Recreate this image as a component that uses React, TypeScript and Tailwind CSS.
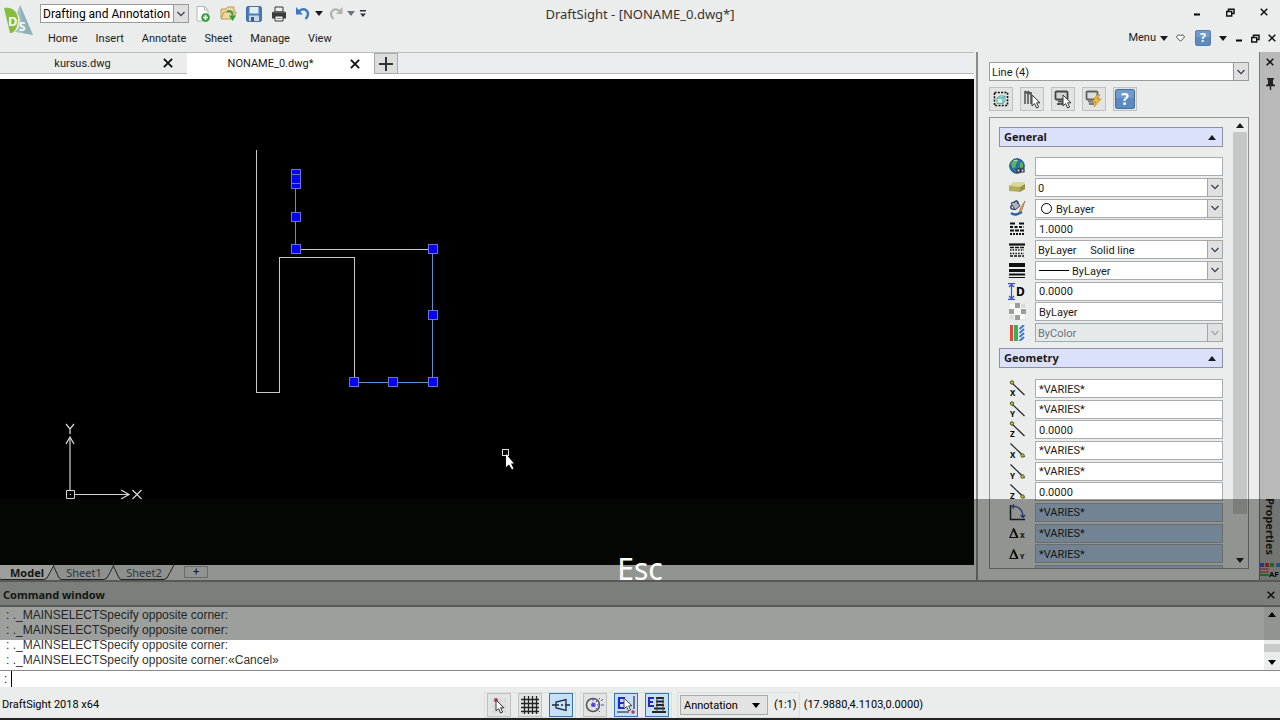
import type { ReactNode } from "react";

const Chevron = ({ className = "text-gray-700" }: { className?: string }) => (
    <svg width="8" height="6" viewBox="0 0 8 6" fill="none" stroke="currentColor" strokeWidth="1.3" className={className}>
        <path d="M.5 1 4 4.6 7.5 1" />
    </svg>
);

const Caret = ({ up = false, className = "" }: { up?: boolean; className?: string }) => (
    <svg width="8" height="5" viewBox="0 0 8 5" className={className}>
        <path d={up ? "M0 5h8L4 0z" : "M0 0h8L4 5z"} fill="currentColor" />
    </svg>
);

const Minimize = () => (
    <svg width="8" height="8" viewBox="0 0 8 8"><path d="M1 6.500h6" stroke="#000" strokeWidth="2" /></svg>
);

const Restore = () => (
    <svg width="9" height="9" viewBox="0 0 9 9" fill="none" stroke="#111">
        <path d="M2.500 3V1.200h5.500v4.300H6" strokeWidth="1.500" />
        <path d="M.7 3.500h5v4.500h-5z" strokeWidth="1.400" />
    </svg>
);

const Cross = ({ size = 8 }: { size?: number }) => (
    <svg width={size} height={size} viewBox="0 0 8 8" stroke="#111" strokeWidth="1.500">
        <path d="M.7.7l6.600 6.600M7.300.7.700 7.300" />
    </svg>
);

const Logo = () => (
    <svg width="30" height="32" viewBox="0 0 30 32">
        <path d="M0 4c9-2 14 5 14 12S10 30 6 29z" fill="#86bd3c" />
        <path d="M16 1 29 31 11 28c6-5 6-14 2-19z" fill="#a3c3c8" />
        <path d="M16 1 29 31l-10-2z" fill="#7fa5af" opacity=".6" />
        <text x="4" y="22" fontSize="13" fontWeight="bold" fill="#f4f8e8" fontFamily="Noto Sans">D</text>
        <text x="15" y="27" fontSize="12" fontWeight="bold" fill="#f4f8fa" fontFamily="Noto Sans">S</text>
    </svg>
);

const NewFile = () => (
    <svg width="16" height="16" viewBox="0 0 16 16">
        <path d="M2 .5h7.500L13 4v11H2z" fill="#fbfbfb" stroke="#b5b8b5" />
        <path d="M9.500.5V4H13" fill="none" stroke="#b5b8b5" />
        <circle cx="10.500" cy="11.500" r="4.300" fill="#2fa03c" />
        <path d="M10.500 9v5M8 11.500h5" stroke="#fff" strokeWidth="1.700" />
    </svg>
);

const OpenFile = () => (
    <svg width="17" height="16" viewBox="0 0 17 16">
        <path d="M1 12V3h5l1.500-2H14v4" fill="#ead9a4" stroke="#b89b55" />
        <path d="M1 13 4 6h12l-2.500 7z" fill="#efd9a0" stroke="#b89b55" />
        <path d="M7 5.500c4-1.500 5.500 1 5.500 4" fill="none" stroke="#3a9c3a" strokeWidth="2" />
        <path d="M9 9.500h7L12.500 15z" fill="#3a9c3a" />
    </svg>
);

const Save = () => (
    <svg width="16" height="16" viewBox="0 0 16 16">
        <rect x=".7" y=".7" width="14.600" height="14.600" rx="1" fill="#4b7fb9" stroke="#2d5d94" />
        <path d="M3.500 1h9v6.500h-9z" fill="#e5edf4" />
        <path d="M3 9.500h10V15H3z" fill="#c8d7e6" />
        <path d="M5 11h3v4H5z" fill="#355f8f" />
    </svg>
);

const Print = () => (
    <svg width="16" height="16" viewBox="0 0 16 16">
        <path d="M4 1h8v5H4z" fill="#eee" stroke="#333" />
        <path d="M1 6h14v6.500H1z" fill="#3a3c3c" />
        <path d="M3 5h10l2 2H1z" fill="#606262" />
        <path d="M4 10h8v5H4z" fill="#f4f4f4" stroke="#333" />
        <path d="M5.500 12.500h5" stroke="#888" />
    </svg>
);

const Undo = () => (
    <svg width="15" height="15" viewBox="0 0 15 15">
        <path d="M3 5c7-4.500 12 2 6.500 8" fill="none" stroke="#3c78bf" strokeWidth="2.400" />
        <path d="M0 1v7.500h7z" fill="#3c78bf" />
    </svg>
);

const Redo = () => (
    <svg width="15" height="15" viewBox="0 0 15 15">
        <path d="M12 5C5 .5 0 7 5.500 13" fill="none" stroke="#b1b3b3" strokeWidth="2.200" />
        <path d="M14.500 1v7h-6.500z" fill="#b1b3b3" />
    </svg>
);

const Heart = () => (
    <svg width="9" height="8" viewBox="0 0 9 8">
        <path d="M4.500 7.200 1 3.700C0 1.500 3-.3 4.500 2 6-.3 9 1.500 8 3.700z" fill="#fff" stroke="#444" />
    </svg>
);

const Help = ({ size = 18 }: { size?: number }) => (
    <svg width={size} height={size} viewBox="0 0 18 18">
        <rect x=".5" y=".5" width="17" height="17" rx="2" fill="#5b8bc1" stroke="#45709f" />
        <path d="M1 1h16v7H1z" fill="#7fa6d2" opacity=".6" />
        <text x="9" y="14" textAnchor="middle" fontSize="14" fontWeight="bold" fill="#fff" fontFamily="Noto Sans">?</text>
    </svg>
);

const pointer = "M0 0v11l2.600-2.400 2 4.400 2-1-2-4.200H8z";

const AddSelection = () => (
    <svg width="16" height="16" viewBox="0 0 16 16" fill="none">
        <rect x="1.500" y="1.500" width="13" height="13" stroke="#111" strokeWidth="1.600" strokeDasharray="2 1.300" />
        <path d="M4 7l3-2h5v5l-2 2.500H4z" fill="#cfeee2" stroke="#45b584" />
        <path d="M4 7h6v5.500M10 7l2-2" stroke="#4f8ed0" />
    </svg>
);

const SelectEntities = () => (
    <svg width="19" height="19" viewBox="0 0 19 19">
        <path d="M2 1v13M5 1v13M8 2v12M2 1l3 3M5 1l3 4" stroke="#4d4f4f" strokeWidth="1.500" fill="none" />
        <path d={pointer} transform="translate(9 5)" fill="#fff" stroke="#333" />
    </svg>
);

const SelectScreen = () => (
    <svg width="19" height="19" viewBox="0 0 19 19">
        <rect x="1.500" y="1.500" width="12" height="8" rx="1" fill="#d2d4d4" stroke="#444" strokeWidth="1.800" />
        <path d="M4 11.500h8M3 14h7" stroke="#555" strokeWidth="2" />
        <path d={pointer} transform="translate(9 5)" fill="#fff" stroke="#333" />
    </svg>
);

const QuickSelect = () => (
    <svg width="18" height="18" viewBox="0 0 18 18">
        <rect x="1.500" y="1.500" width="11" height="8" rx="1" fill="#dcdddd" stroke="#5f6161" strokeWidth="1.800" />
        <path d="M3 11.500h8M4 14h5" stroke="#777" strokeWidth="1.800" />
        <path d="M12 5 7 12h4l-2 5 7-8h-4l3-4z" fill="#f4bc2e" stroke="#ad7b16" strokeWidth=".6" />
    </svg>
);

const Globe = () => (
    <svg width="17" height="17" viewBox="0 0 17 17">
        <circle cx="8" cy="8" r="7.300" fill="#286fab" stroke="#24486c" />
        <path d="M4 2.500c4-2 5 1 3.500 3S8 9 5 10 3 6 2 5zM11 4l3 1v4l-3 1z" fill="#58b65a" />
        <path d="M8 11h3v3H8zM12 11h3v3h-3z" fill="#ddd" stroke="#333" strokeWidth="1.200" />
        <path d="M5 3c2-1 3-1 4 0" stroke="#cfeaf5" fill="none" />
    </svg>
);

const Layer = () => (
    <svg width="18" height="12" viewBox="0 0 18 12">
        <path d="M1 4.500 6 1h10l1 2-5 3z" fill="#dcd795" />
        <path d="M1 4.500 12 6v5L1 10z" fill="#b3ac5c" />
        <path d="M12 6l5-3v5l-5 3z" fill="#969045" />
    </svg>
);

const Paint = () => (
    <svg width="17" height="16" viewBox="0 0 17 16">
        <path d="M2 3 8 1l3 5-5 4z" fill="#aab4c2" stroke="#39475f" />
        <path d="M3 5c-3 3 0 5 3 4M5 3c1-3 4-3 4 1" fill="none" stroke="#39475f" strokeWidth="1.400" />
        <path d="M2 13c4 3 7 1 11-1" stroke="#315fa5" strokeWidth="2.500" fill="none" />
        <path d="M16 1l-3 9-3 3 1-4z" fill="#dfa346" stroke="#87602c" strokeWidth=".6" />
    </svg>
);

const LineScale = () => (
    <svg width="16" height="14" viewBox="0 0 16 14" stroke="#111" strokeWidth="1.800">
        <path d="M1 1.500h14" strokeDasharray="5 4" />
        <path d="M1 5h14" strokeDasharray="3 1.500" />
        <path d="M1 8.500h14" strokeDasharray="4 1" />
        <path d="M1 12h14" strokeDasharray="2 1" />
    </svg>
);

const LineStyle = () => (
    <svg width="16" height="14" viewBox="0 0 16 14" stroke="#111" strokeWidth="1.500">
        <path d="M0 1.500h16" strokeWidth="2.200" />
        <path d="M1 4.500h14" strokeDasharray="4 1" />
        <path d="M1 7h14M1 10.500h14" strokeDasharray="1.500 1.200" />
        <path d="M1 13h14" strokeDasharray="3 1" />
    </svg>
);

const LineWeight = () => (
    <svg width="16" height="16" viewBox="0 0 16 16">
        <path d="M0 1h16v4H0zM0 7h16v3H0zM0 11.500h16v2H0zM0 15h16v1H0z" fill="#111" />
    </svg>
);

const Thickness = () => (
    <svg width="18" height="17" viewBox="0 0 18 17">
        <path d="M0 .7h7M0 16.300h7M3.500 1v15M1 4l2.500-2.500L6 4M1 13l2.500 2.500L6 13" stroke="#3450c8" strokeWidth="1.200" fill="none" />
        <text x="8" y="13" fontSize="12" fontWeight="bold" fontFamily="Noto Sans">D</text>
    </svg>
);

const Transparency = () => (
    <svg width="17" height="17" viewBox="0 0 17 17">
        <path d="M0 0h17v17H0z" fill="#fafafa" stroke="#d8d8d8" />
        <path d="M6 0h5v5H6zM0 6h5v5H0zM12 6h5v5h-5zM6 12h5v5H6z" fill="#9c9e9a" />
        <path d="M1 12h4v4H1zM12 1h4v4h-4z" fill="#d9dbd7" />
    </svg>
);

const PrintStyle = () => (
    <svg width="16" height="16" viewBox="0 0 16 16">
        <path d="M1 0h3v16H1z" fill="#e04a3c" />
        <path d="M5 0h4v16H5z" fill="#3cae55" />
        <path d="M10.500 4 15 0M10.500 8 15 4M10.500 12 15 8M10.500 16l4.500-4" stroke="#3c78d0" strokeWidth="2" />
    </svg>
);

// start point icons carry the dot on top, end point icons at the bottom
const PointIcon = ({ axis, end = false }: { axis: string; end?: boolean }) => (
    <svg width="17" height="17" viewBox="0 0 17 17">
        <path d="M1.500 1.500 15.500 15" stroke="#222" strokeWidth="1.200" />
        <circle cx={end ? 13.5 : 3} cy={end ? 13.5 : 2.5} r="1.700" fill="#c3c83a" stroke="#4a4c20" />
        <text x="1" y="16" fontSize="8" fontWeight="bold" fontFamily="Noto Sans">{axis}</text>
    </svg>
);

const AngleIcon = () => (
    <svg width="17" height="17" viewBox="0 0 17 17" fill="none">
        <path d="M1.500 1v14.500H16" stroke="#222" strokeWidth="1.500" />
        <path d="M3 2.500c7-1 11 4 11 11M5 .5l-2 2 2 2M11.500 11l2.500 2.500L16 11" stroke="#3555b0" strokeWidth="1.300" />
    </svg>
);

const DeltaIcon = ({ axis }: { axis: string }) => (
    <svg width="17" height="14" viewBox="0 0 17 14">
        <path d="M1 11.500 4.500 3l4 8.500z" fill="none" stroke="#111" strokeWidth="1.200" />
        <path d="M4.500 3l4 8.500" stroke="#111" strokeWidth="2" />
        <text x="11" y="12" fontSize="7" fontWeight="bold" fontFamily="Noto Sans">{axis}</text>
    </svg>
);

const Pin = () => (
    <svg width="9" height="12" viewBox="0 0 9 12">
        <path d="M1 0h7v1.500H7V6l2 1v1.200H5.200V12H3.800V8.200H0V7l2-1V1.500H1z" fill="#222" />
    </svg>
);

const Snap = () => (
    <svg width="18" height="18" viewBox="0 0 18 18">
        <path d="M2 5h14M2 11h14M2 16h14M4 2v14M10 2v14M15 2v14" stroke="#cfcfcf" strokeDasharray="2 1" />
        <circle cx="6" cy="4" r="2" fill="#c23850" />
        <path d={pointer} transform="translate(6 4)" fill="#fff" stroke="#333" />
    </svg>
);

const GridIcon = () => (
    <svg width="18" height="18" viewBox="0 0 18 18">
        <path d="M0 3.500h18M0 7.500h18M0 11.500h18M0 15.500h18M3.500 0v18M7.500 0v18M11.500 0v18M15.500 0v18" stroke="#222" strokeWidth="1.300" />
    </svg>
);

const Ortho = () => (
    <svg width="18" height="14" viewBox="0 0 18 14" fill="none" stroke="#1b2b3b" strokeWidth="1.300">
        <path d="M14 1.500v11L4 10V4z" />
        <path d="M0 7h7M9 7h2M13 7h5" />
    </svg>
);

const Polar = () => (
    <svg width="20" height="18" viewBox="0 0 20 18" fill="none">
        <circle cx="8" cy="9" r="6.500" stroke="#555" strokeWidth="1.500" />
        <path d="M8 9h11M8 9l7-7M8 9l7 7M8 9V1M16 5l2-2" stroke="#5651c8" strokeDasharray="3 1" />
        <circle cx="8" cy="9" r="2" fill="#4a43e0" />
    </svg>
);

const ESnap = () => (
    <svg width="20" height="19" viewBox="0 0 20 19">
        <path d="M2 3h7M2 8h6M2 13h7M3 3v10" stroke="#2427cf" strokeWidth="2.200" />
        <path d={pointer} transform="translate(8 3)" fill="#fff" stroke="#444" />
        <path d="M1 17h12M18 1v13" stroke="#555" strokeWidth="1.500" />
        <circle cx="17" cy="17" r="1.800" fill="#d42c45" />
    </svg>
);

const ETrack = () => (
    <svg width="20" height="19" viewBox="0 0 20 19">
        <path d="M1 3h6M1 7h5M1 11h6M2 3v8" stroke="#2427cf" strokeWidth="2" />
        <path d="M9 3h8M9 6.500h8M9 10h8M7 13.500h11M5 17h14" stroke="#222" strokeWidth="2.200" />
        <path d="M10 2v15M16 2v15" stroke="#444" />
    </svg>
);

const Palette = () => (
    <svg width="20" height="15" viewBox="0 0 20 15">
        <path d="M0 0h4v4H0z" fill="#3c50c8" /><path d="M5 0h4v4H5z" fill="#d82630" /><path d="M10 0h4v4h-4z" fill="#309b3c" />
        <path d="M16 0h4v4h-4z" fill="#4b74c9" />
        <path d="M0 6h9M0 9h9" stroke="#c33c50" strokeWidth="1.500" strokeDasharray="2.500 .5" />
        <path d="M0 12h9" stroke="#30a03c" strokeWidth="2" />
        <text x="9" y="14" fontSize="8" fontWeight="bold" fontFamily="Roboto">AF</text>
    </svg>
);

type Row = {
    label: string;
    icon?: ReactNode;
    value: string;
    kind?: "select";
    mark?: "circle" | "line";
    disabled?: boolean;
    readOnly?: boolean;
};

const general: Row[] = [
    { label: "Hyperlink", icon: <Globe />, value: "" },
    { label: "Layer", icon: <Layer />, value: "0", kind: "select" },
    { label: "Line color", icon: <Paint />, value: "ByLayer", kind: "select", mark: "circle" },
    { label: "Line scale", icon: <LineScale />, value: "1.0000" },
    { label: "Line style", icon: <LineStyle />, value: "ByLayer\u00a0\u00a0\u00a0\u00a0\u00a0Solid line", kind: "select" },
    { label: "Line weight", icon: <LineWeight />, value: "ByLayer", kind: "select", mark: "line" },
    { label: "Thickness", icon: <Thickness />, value: "0.0000" },
    { label: "Transparency", icon: <Transparency />, value: "ByLayer" },
    { label: "Print style", icon: <PrintStyle />, value: "ByColor", kind: "select", disabled: true },
];

const geometry: Row[] = [
    { label: "Start X", icon: <PointIcon axis="X" />, value: "*VARIES*" },
    { label: "Start Y", icon: <PointIcon axis="Y" />, value: "*VARIES*" },
    { label: "Start Z", icon: <PointIcon axis="Z" />, value: "0.0000" },
    { label: "End X", icon: <PointIcon axis="X" end />, value: "*VARIES*" },
    { label: "End Y", icon: <PointIcon axis="Y" end />, value: "*VARIES*" },
    { label: "End Z", icon: <PointIcon axis="Z" end />, value: "0.0000" },
    { label: "Angle", icon: <AngleIcon />, value: "*VARIES*", readOnly: true },
    { label: "Delta X", icon: <DeltaIcon axis="X" />, value: "*VARIES*", readOnly: true },
    { label: "Delta Y", icon: <DeltaIcon axis="Y" />, value: "*VARIES*", readOnly: true },
    { label: "Delta Z", value: "", readOnly: true },
];

function PropertyRow({ row }: { row: Row }) {
    const pad = row.mark === "circle" ? "pl-5" : row.mark === "line" ? "pl-9" : "pl-0.5";
    return (
        <label className="flex h-[19px] items-center">
            <span className="flex w-9 justify-center">{row.icon}</span>
            {row.kind === "select" ? (
                <span className="relative flex h-full flex-1">
                    <select
                        aria-label={row.label}
                        disabled={row.disabled}
                        className={`w-full appearance-none border pt-0.5 ${pad} ${row.disabled ? "border-[#9faab5] bg-[#e6e9e9] text-gray-500 opacity-100" : "border-[#a9acae] bg-white"}`}
                    >
                        <option>{row.value}</option>
                    </select>
                    {row.mark === "circle" && <span className="absolute top-1 left-1.5 size-[11px] rounded-full border border-black" />}
                    {row.mark === "line" && <span className="absolute top-[9px] left-1 w-[30px] border-t border-black" />}
                    <span className="pointer-events-none absolute inset-y-0 right-0 flex w-4 items-center justify-center border border-[#a4a6a6] bg-[#dfe0df]">
                        <Chevron className={row.disabled ? "text-gray-400" : "text-gray-700"} />
                    </span>
                </span>
            ) : (
                <input
                    aria-label={row.label}
                    defaultValue={row.value}
                    readOnly={row.readOnly}
                    className={`h-full min-w-0 flex-1 border border-[#a9acae] px-[3px] pt-px ${row.readOnly ? "bg-[#b7d2ef]" : "bg-white"}`}
                />
            )}
        </label>
    );
}

function SectionHeader({ title }: { title: string }) {
    return (
        <button className="flex h-5 w-full items-center justify-between border border-[#8e919b] bg-[#dce1fb] px-1 font-['Noto_Sans',sans-serif] font-bold">
            {title}
            <Caret up className="mr-0.5" />
        </button>
    );
}

function ToolButton({ label, active = false, children }: { label: string; active?: boolean; children: ReactNode }) {
    return (
        <button
            aria-label={label}
            className={`flex size-6 items-center justify-center border ${active ? "border-[#3277b0] bg-[#c6e1f7]" : "border-[#bfc1c0] bg-[#e2e4e3]"}`}
        >
            {children}
        </button>
    );
}

function SheetTab({ name, active = false }: { name: string; active?: boolean }) {
    return (
        <button className={`relative -mr-1 h-[15px] w-16 font-['Noto_Sans',sans-serif] leading-[15px] ${active ? "z-10 pl-1.5 font-bold" : "text-gray-600"}`}>
            <svg viewBox="0 0 64 15" className="absolute inset-0 size-full" fill="none" stroke="#333">
                <path d="M1 0l6 13 2 1.500h43l3-1.500L62 0" fill={active ? "#fff" : "#e4e6e4"} />
            </svg>
            <span className="relative">{name}</span>
        </button>
    );
}

const grips = [
    [296, 95], [296, 105], [296, 100], [296, 138], [296, 170], [433, 170],
    [433, 236], [433, 303], [393, 303], [354, 303],
];

function Canvas() {
    return (
        <div className="relative flex-1 overflow-hidden bg-black">
            <svg className="absolute inset-0 size-full" fill="none" shapeRendering="crispEdges">
                <path d="M256.500 71v242h22.500V178.500h75.500V303M296 170h137" stroke="#c9c9c9" />
                <path d="M295.500 95v75M432.500 170v133h-79" stroke="#5c94cf" />
                {grips.map(([x, y]) => (
                    <rect key={`${x}-${y}`} x={x - 4.5} y={y - 4.5} width="9" height="9" fill="#0404f0" stroke="#6f6fd8" />
                ))}
                {/* coordinate system icon */}
                <g stroke="#d5d5d5" shapeRendering="auto">
                    <path d="M70 411v-52M75 415.500h54" strokeWidth="1.200" />
                    <path d="M66 365l4-7 4 7M121 411l8 4.500-8 4.500" strokeWidth="1.300" />
                    <path d="M66.500 411.500h8v8h-8zM70 415.500h1" />
                    <path d="M66 345l4 5 4-5M70 350v5M132.500 411l9 9M141.500 411l-9 9" strokeWidth="1.300" />
                </g>
                <path d="M502.500 370.500h6v6h-6z" stroke="#ddd" />
                <path d="M506 375v13l3-2.500 3 5 1.500-1-2.500-5h3z" fill="#fff" shapeRendering="auto" />
            </svg>
        </div>
    );
}

export default function App() {
    return (
        <div className="relative flex min-h-screen flex-col overflow-hidden bg-[#ebedec] font-['Roboto',sans-serif] text-[11px] text-[#1a1a1a]">
            <header className="flex h-[52px]">
                <div className="flex flex-1">
                    <div className="w-10 pt-1 pl-1"><Logo /></div>
                    <div>
                        <div className="flex h-[27px] items-center">
                            <span className="relative mr-1.5 flex">
                                <select aria-label="Workspace" className="h-[19px] w-[149px] appearance-none border border-[#999] bg-white pl-0.5 text-xs text-black">
                                    <option>Drafting and Annotation</option>
                                </select>
                                <span className="pointer-events-none absolute inset-y-0 right-0 flex w-4 items-center justify-center border border-[#999] bg-[#dedfde]"><Chevron /></span>
                            </span>
                            <div className="flex items-center gap-[9px]">
                                <button aria-label="New"><NewFile /></button>
                                <button aria-label="Open"><OpenFile /></button>
                                <button aria-label="Save"><Save /></button>
                                <button aria-label="Print"><Print /></button>
                                <button aria-label="Undo" className="flex items-center gap-1"><Undo /><Caret /></button>
                                <button aria-label="Redo" className="-ml-1 flex items-center gap-1 text-gray-500"><Redo /><Caret /></button>
                                <button aria-label="Customize" className="-ml-1">
                                    <svg width="6" height="7" viewBox="0 0 6 7"><path d="M0 0h6v1.500H0zM0 3.500h6L3 7z" fill="#333" /></svg>
                                </button>
                            </div>
                        </div>
                        <nav className="flex h-[25px] items-center gap-[18px] pl-2">
                            <button>Home</button>
                            <button>Insert</button>
                            <button>Annotate</button>
                            <button>Sheet</button>
                            <button>Manage</button>
                            <button>View</button>
                        </nav>
                    </div>
                </div>
                <h1 className="h-7 font-['Noto_Sans',sans-serif] text-[13px] leading-7 text-[#333]">DraftSight - [NONAME_0.dwg*]</h1>
                <div className="flex flex-1 flex-col items-end">
                    <div className="flex h-6 items-center gap-[25px] pr-3">
                        <button aria-label="Minimize"><Minimize /></button>
                        <button aria-label="Restore"><Restore /></button>
                        <button aria-label="Close"><Cross /></button>
                    </div>
                    <div className="flex h-7 items-center gap-2">
                        <button className="flex items-center gap-1">Menu <Caret /></button>
                        <button aria-label="Favorites" className="mr-0.5"><Heart /></button>
                        <button aria-label="Help"><Help size={16} /></button>
                        <button aria-label="Help menu"><Caret /></button>
                        <button aria-label="Minimize document"><Minimize /></button>
                        <button aria-label="Restore document"><Restore /></button>
                        <button aria-label="Close document" className="mr-1"><Cross /></button>
                    </div>
                </div>
            </header>

            <main className="flex h-[528px] flex-auto">
                <section className="flex flex-1 flex-col">
                    <div className="flex h-[27px] border-t border-[#bbb] bg-white">
                        <div className="flex h-[21px] w-[187px] items-center border-b border-[#bbb] bg-[#ebedec]">
                            <button className="flex-1 pt-0.5 pl-1.5">kursus.dwg</button>
                            <button aria-label="Close kursus.dwg" className="w-7 pl-1"><Cross size={10} /></button>
                        </div>
                        <div className="flex h-[21px] w-[187px] items-center">
                            <button className="flex-1 pt-0.5 pl-3">NONAME_0.dwg*</button>
                            <button aria-label="Close NONAME_0.dwg" className="w-8 pl-2"><Cross size={10} /></button>
                        </div>
                        <button aria-label="New drawing" className="flex h-[21px] w-6 items-center justify-center border border-[#aaa] bg-[#dcdedc]">
                            <svg width="14" height="14" viewBox="0 0 14 14" stroke="#333" strokeWidth="2"><path d="M7 0v14M0 7h14" /></svg>
                        </button>
                        <div className="h-[21px] flex-1 border-b border-[#bbb] bg-[#ebedf0]" />
                    </div>
                    <Canvas />
                    <div className="-ml-2 flex h-[15px]">
                        <SheetTab name="Model" active />
                        <SheetTab name="Sheet1" />
                        <SheetTab name="Sheet2" />
                        <button aria-label="New sheet" className="mt-px ml-3 h-3 w-6 border border-[#aaa] text-center leading-[10px]">+</button>
                    </div>
                </section>

                <aside className="ml-0.5 flex w-[283px] flex-col border-l-2 border-[#8a8c8b] pt-2.5 pr-2.5 pl-[11px]">
                    <span className="relative flex">
                        <select aria-label="Selection" className="h-[19px] w-full appearance-none border border-[#999c9b] bg-white pt-0.5 pl-0.5">
                            <option>Line (4)</option>
                        </select>
                        <span className="pointer-events-none absolute inset-y-0 right-0 flex w-4 items-center justify-center border border-[#999] bg-[#dedfde]"><Chevron /></span>
                    </span>
                    <div className="mt-1.5 flex gap-[7px]">
                        <ToolButton label="Add to selection"><AddSelection /></ToolButton>
                        <ToolButton label="Select entities"><SelectEntities /></ToolButton>
                        <ToolButton label="Select on screen"><SelectScreen /></ToolButton>
                        <ToolButton label="Quick select"><QuickSelect /></ToolButton>
                        <ToolButton label="Help"><Help size={20} /></ToolButton>
                    </div>
                    <div className="mt-1.5 mb-[11px] flex h-0 flex-1 overflow-hidden border border-[#8f9291]">
                        <div className="flex-1 pt-[9px] pl-[9px]">
                            <SectionHeader title="General" />
                            <div className="mt-[10px] grid h-[185px] content-between">
                                {general.map((row) => <PropertyRow key={row.label} row={row} />)}
                            </div>
                            <div className="pt-1.5"><SectionHeader title="Geometry" /></div>
                            <div className="mt-[11px] grid h-[205px] content-between">
                                {geometry.map((row) => <PropertyRow key={row.label} row={row} />)}
                            </div>
                        </div>
                        <div className="ml-[9px] flex w-4 flex-col items-center py-[5px]">
                            <Caret up />
                            <div className="mt-1 mb-11 w-3.5 flex-1 bg-[#c6c8c7]" />
                            <Caret />
                        </div>
                    </div>
                </aside>

                <aside className="flex w-[21px] flex-col items-center overflow-hidden border-l border-[#777] bg-[#b8b9b8] pt-1.5">
                    <button aria-label="Close panel"><Cross /></button>
                    <button aria-label="Pin panel" className="mt-3"><Pin /></button>
                    <div className="mt-auto font-['Noto_Sans',sans-serif] leading-4 font-bold [writing-mode:vertical-rl]">Properties</div>
                    <div className="mt-2 mb-0.5"><Palette /></div>
                </aside>
            </main>

            <section>
                <div className="flex h-[27px] items-center justify-between border-y-2 border-[#8b8d8b] bg-[#c6c9c5] px-[3px] pt-[3px] font-['Noto_Sans',sans-serif] font-bold">
                    <h2>Command window</h2>
                    <button aria-label="Close command window" className="mr-0.5"><Cross /></button>
                </div>
                <div className="flex h-16 border-b border-[#888] bg-white font-['Liberation_Sans',sans-serif] text-xs leading-[15px] text-[#333]">
                    <div className="flex-1 pt-px pl-1.5">
                        <p>: ._MAINSELECTSpecify opposite corner:</p>
                        <p>: ._MAINSELECTSpecify opposite corner:</p>
                        <p>: ._MAINSELECTSpecify opposite corner:</p>
                        <p>: ._MAINSELECTSpecify opposite corner:«Cancel»</p>
                    </div>
                    <div className="flex w-4 flex-col items-center bg-[#ebedec] py-[5px] text-black">
                        <Caret up />
                        <div className="mt-auto mb-2 h-2 w-full bg-[#c8cac9]" />
                        <Caret />
                    </div>
                </div>
                <label className="flex h-4 items-center bg-white pl-1 font-['Liberation_Sans',sans-serif] text-xs">
                    :
                    <input aria-label="Command" className="ml-1 h-4 flex-1 border-l border-black outline-none" />
                </label>
            </section>

            <footer className="flex h-[33px] items-center border-b-2 border-[#222] pt-1 text-black">
                <span className="w-[484px] pt-0.5 pl-0.5">DraftSight 2018 x64</span>
                <div className="flex gap-[7px] border border-[#dcdedd] px-0.5">
                    <ToolButton label="Snap"><Snap /></ToolButton>
                    <ToolButton label="Grid"><GridIcon /></ToolButton>
                    <ToolButton label="Ortho" active><Ortho /></ToolButton>
                </div>
                <div className="ml-1 flex gap-[7px] border border-[#dcdedd] px-0.5">
                    <ToolButton label="Polar"><Polar /></ToolButton>
                    <ToolButton label="ESnap" active><ESnap /></ToolButton>
                    <ToolButton label="ETrack" active><ETrack /></ToolButton>
                </div>
                <div className="ml-[5px] flex h-[26px] items-center border border-[#dcdedd] pr-0.5 pl-0.5">
                    <span className="relative flex">
                        <select aria-label="Annotation scale" className="h-5 w-[88px] appearance-none border border-[#aaa] bg-[#e2e3e2] pt-0.5 pl-[3px]">
                            <option>Annotation</option>
                        </select>
                        <Caret className="pointer-events-none absolute top-2 right-2" />
                    </span>
                    <span className="ml-1.5 pt-0.5">(1:1)</span>
                </div>
                <span className="ml-1 pt-0.5">(17.9880,4.1103,0.0000)</span>
            </footer>

            {/* keystroke caption over the lower part of the window */}
            <div className="pointer-events-none absolute inset-x-0 bottom-20 z-20 h-[141px] bg-[#0a0f0a]/40 pt-[50px] text-center font-['Noto_Sans',sans-serif] text-[30px] leading-10 text-white">
                Esc
            </div>
        </div>
    );
}
